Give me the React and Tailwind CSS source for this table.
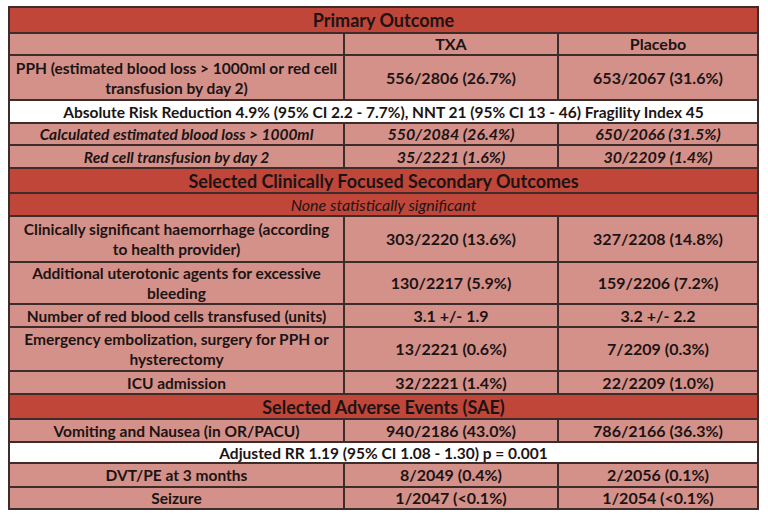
export default function App() {
  const cell = "border-2 border-[#3e2c2a] px-1 py-0 text-center align-middle";
  const pink = "bg-[#d4918a]";
  const red = "bg-[#c0463a]";
  const white = "bg-white";

  const rows = [
    { type: "head", h: 26, text: "Primary Outcome" },
    { type: "row", h: 22, cols: ["", "TXA", "Placebo"] },
    { type: "row", h: 45, cols: [<>PPH (estimated blood loss &gt; 1000ml or red cell<br />transfusion by day 2)</>, "556/2806 (26.7%)", "653/2067 (31.6%)"] },
    { type: "full", h: 23, text: "Absolute Risk Reduction 4.9% (95% CI 2.2 - 7.7%), NNT 21 (95% CI 13 - 46) Fragility Index 45" },
    { type: "row", h: 22, italic: true, cols: ["Calculated estimated blood loss > 1000ml", "550/2084 (26.4%)", "650/2066 (31.5%)"] },
    { type: "row", h: 23, italic: true, cols: ["Red cell transfusion by day 2", "35/2221 (1.6%)", "30/2209 (1.4%)"] },
    { type: "head", h: 25, text: "Selected Clinically Focused Secondary Outcomes" },
    { type: "note", h: 23, text: "None statistically significant" },
    { type: "row", h: 46, cols: [<>Clinically significant haemorrhage (according<br />to health provider)</>, "303/2220 (13.6%)", "327/2208 (14.8%)"] },
    { type: "row", h: 42, cols: [<>Additional uterotonic agents for excessive<br />bleeding</>, "130/2217 (5.9%)", "159/2206 (7.2%)"] },
    { type: "row", h: 23, cols: ["Number of red blood cells transfused (units)", "3.1 +/- 1.9", "3.2 +/- 2.2"] },
    { type: "row", h: 44, cols: [<>Emergency embolization, surgery for PPH or<br />hysterectomy</>, "13/2221 (0.6%)", "7/2209 (0.3%)"] },
    { type: "row", h: 23, cols: ["ICU admission", "32/2221 (1.4%)", "22/2209 (1.0%)"] },
    { type: "head", h: 25, text: "Selected Adverse Events (SAE)" },
    { type: "row", h: 23, cols: ["Vomiting and Nausea (in OR/PACU)", "940/2186 (43.0%)", "786/2166 (36.3%)"] },
    { type: "full", h: 21, text: "Adjusted RR 1.19 (95% CI 1.08 - 1.30) p = 0.001" },
    { type: "row", h: 24, cols: ["DVT/PE at 3 months", "8/2049 (0.4%)", "2/2056 (0.1%)"] },
    { type: "row", h: 22, cols: ["Seizure", "1/2047 (<0.1%)", "1/2054 (<0.1%)"] },
  ];

  return (
    <div className="w-[768px] h-[520px] bg-white pt-[6px] pl-[8px] font-['Lato','Open_Sans',sans-serif] text-[#1c1414]">
      <table className="table-fixed border-collapse w-[749px] font-bold text-[15.5px] leading-[18px]">
        <colgroup>
          <col className="w-[335px]" />
          <col className="w-[214px]" />
          <col className="w-[200px]" />
        </colgroup>
        <tbody>
          {rows.map((r, i) => {
            if (r.type === "head") {
              return (
                <tr key={i} style={{ height: r.h }}>
                  <td colSpan={3} className={`${cell} ${red} text-[18px]`}>{r.text}</td>
                </tr>
              );
            }
            if (r.type === "note") {
              return (
                <tr key={i} style={{ height: r.h }}>
                  <td colSpan={3} className={`${cell} ${red} italic font-normal text-[16px]`}>{r.text}</td>
                </tr>
              );
            }
            if (r.type === "full") {
              return (
                <tr key={i} style={{ height: r.h }}>
                  <td colSpan={3} className={`${cell} ${white}`}>{r.text}</td>
                </tr>
              );
            }
            return (
              <tr key={i} style={{ height: r.h }}>
                {r.cols.map((c, j) => (
                  <td key={j} className={`${cell} ${pink} ${r.italic ? "italic" : ""} ${j === 0 ? "leading-[20px]" : "text-[16px]"}`}>{c}</td>
                ))}
              </tr>
            );
          })}
        </tbody>
      </table>
    </div>
  );
}
